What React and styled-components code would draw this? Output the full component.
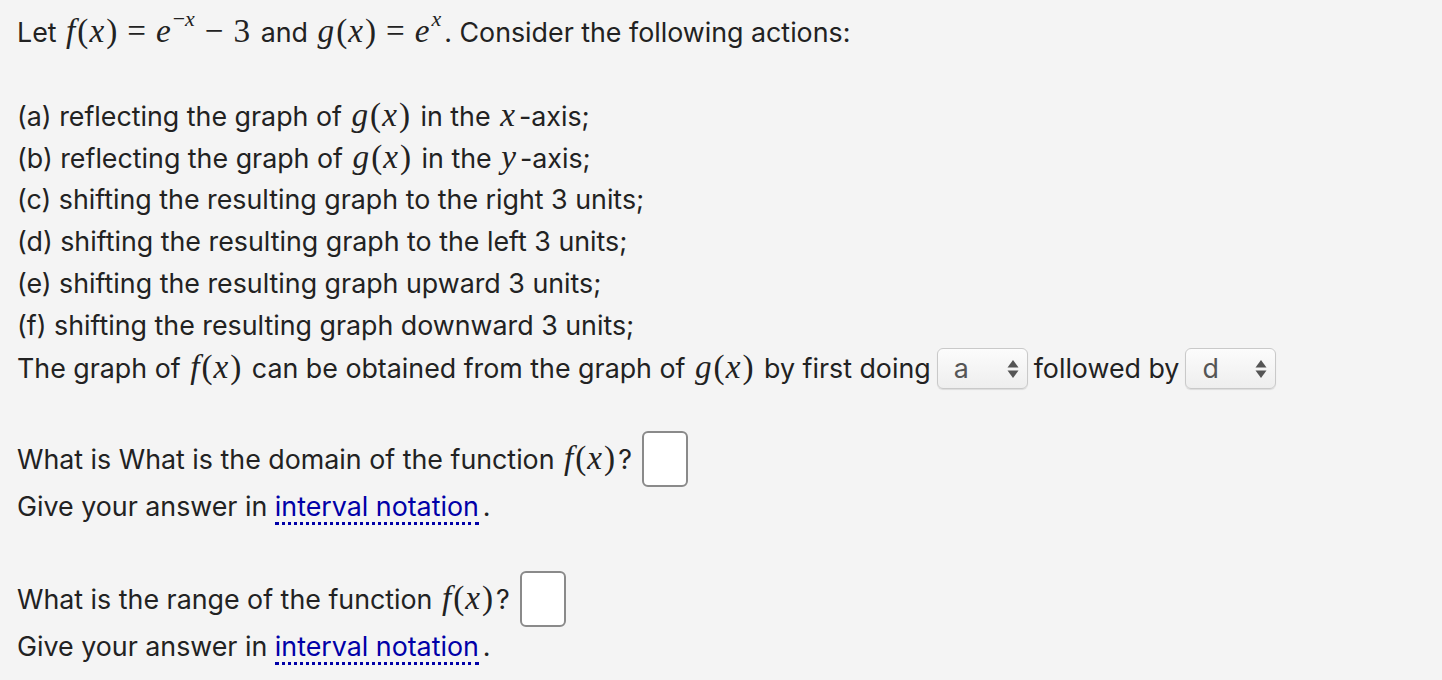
import React from 'react';
import styled, { createGlobalStyle } from 'styled-components';

const GlobalStyle = createGlobalStyle`
  html, body {
    margin: 0;
    padding: 0;
    background: #f4f4f4;
  }
  body {
    font-family: Inter, "Liberation Sans", Arial, sans-serif;
    color: #222;
  }
`;

const Page = styled.div`
  padding: 10px 17px 0;
  font-size: 26.8px;
  line-height: 42px;
`;

const Para = styled.div`
  margin-bottom: ${(p) => p.gap || 0}px;
`;

const Line = styled.div`
  height: ${(p) => p.h || 42}px;
  line-height: ${(p) => p.h || 42}px;
  white-space: nowrap;
`;

const MathWrap = styled.span`
  font-family: "Liberation Serif", "Times New Roman", serif;
  font-size: 1.24em;
  letter-spacing: 1px;
  margin: 0 2px;
  white-space: nowrap;
`;

const V = styled.i`
  font-style: italic;
  margin-right: 1px;
`;

const Op = styled.span`
  margin: 0 ${(p) => p.space || 0}px;
`;

const Sup = styled.sup`
  font-size: 0.66em;
  vertical-align: 0.75em;
  line-height: 0;
  letter-spacing: 0;
`;

const Func = ({ name, arg = 'x' }) => (
  <MathWrap>
    <V>{name}</V>(<V>{arg}</V>)
  </MathWrap>
);

const SelectBox = styled.span`
  display: inline-flex;
  align-items: center;
  justify-content: space-between;
  vertical-align: middle;
  box-sizing: border-box;
  width: 91px;
  height: 41px;
  margin: -4px 6px 0 6px;
  padding: 0 8px 0 16px;
  line-height: 1;
  border: 1px solid #c9c9c9;
  border-radius: 6px;
  background: linear-gradient(#fcfcfc, #eeeeee);
  box-shadow: 0 1px 1px rgba(0, 0, 0, 0.1);
  color: #555;
`;

const Arrows = () => (
  <svg width="12" height="22" viewBox="0 0 12 22">
    <path d="M6 2 L11.5 9.5 L0.5 9.5 Z" fill="#555" />
    <path d="M6 20 L11.5 12.5 L0.5 12.5 Z" fill="#555" />
  </svg>
);

const Select = ({ value }) => (
  <SelectBox>
    <span>{value}</span>
    <Arrows />
  </SelectBox>
);

const AnswerBox = styled.span`
  display: inline-block;
  vertical-align: middle;
  box-sizing: border-box;
  width: 46px;
  height: 56px;
  margin: -6px 0 0 10px;
  border: 2px solid #8a8a8a;
  border-radius: 6px;
  background: #fff;
`;

const Link = styled.span`
  display: inline-block;
  color: #0000a8;
  margin: 0 4px 0 0;
  line-height: 30px;
  padding-bottom: 1px;
  border-bottom: 3px dotted #0000a8;
`;

const Reflect = ({ label, fn, axis }) => (
  <Line>
    {label} reflecting the graph of <Func name={fn} /> in the{' '}
    <MathWrap>
      <V>{axis}</V>
    </MathWrap>
    -axis;
  </Line>
);

const shifts = [
  '(c) shifting the resulting graph to the right 3 units;',
  '(d) shifting the resulting graph to the left 3 units;',
  '(e) shifting the resulting graph upward 3 units;',
  '(f) shifting the resulting graph downward 3 units;',
];

export default function App() {
  return (
    <Page>
      <GlobalStyle />
      <Para gap={42}>
        <Line>
          Let{' '}
          <MathWrap>
            <V>f</V>(<V>x</V>)<Op space={9}>=</Op>
            <V>e</V>
            <Sup>
              −<V>x</V>
            </Sup>
            <Op space={9}>−</Op>3
          </MathWrap>{' '}
          and{' '}
          <MathWrap>
            <V>g</V>(<V>x</V>)<Op space={9}>=</Op>
            <V>e</V>
            <Sup>
              <V>x</V>
            </Sup>
          </MathWrap>
          . Consider the following actions:
        </Line>
      </Para>
      <Para gap={46}>
        <Reflect label="(a)" fn="g" axis="x" />
        <Reflect label="(b)" fn="g" axis="y" />
        {shifts.map((s) => (
          <Line key={s}>{s}</Line>
        ))}
        <Line>
          The graph of <Func name="f" /> can be obtained from the graph of <Func name="g" /> by first doing
          <Select value="a" />
          followed by
          <Select value="d" />
        </Line>
      </Para>
      <Para gap={44}>
        <Line h={48}>
          What is What is the domain of the function <Func name="f" />?
          <AnswerBox />
        </Line>
        <Line h={48}>
          Give your answer in <Link>interval notation</Link>.
        </Line>
      </Para>
      <Para>
        <Line h={48}>
          What is the range of the function <Func name="f" />?
          <AnswerBox />
        </Line>
        <Line h={48}>
          Give your answer in <Link>interval notation</Link>.
        </Line>
      </Para>
    </Page>
  );
}
